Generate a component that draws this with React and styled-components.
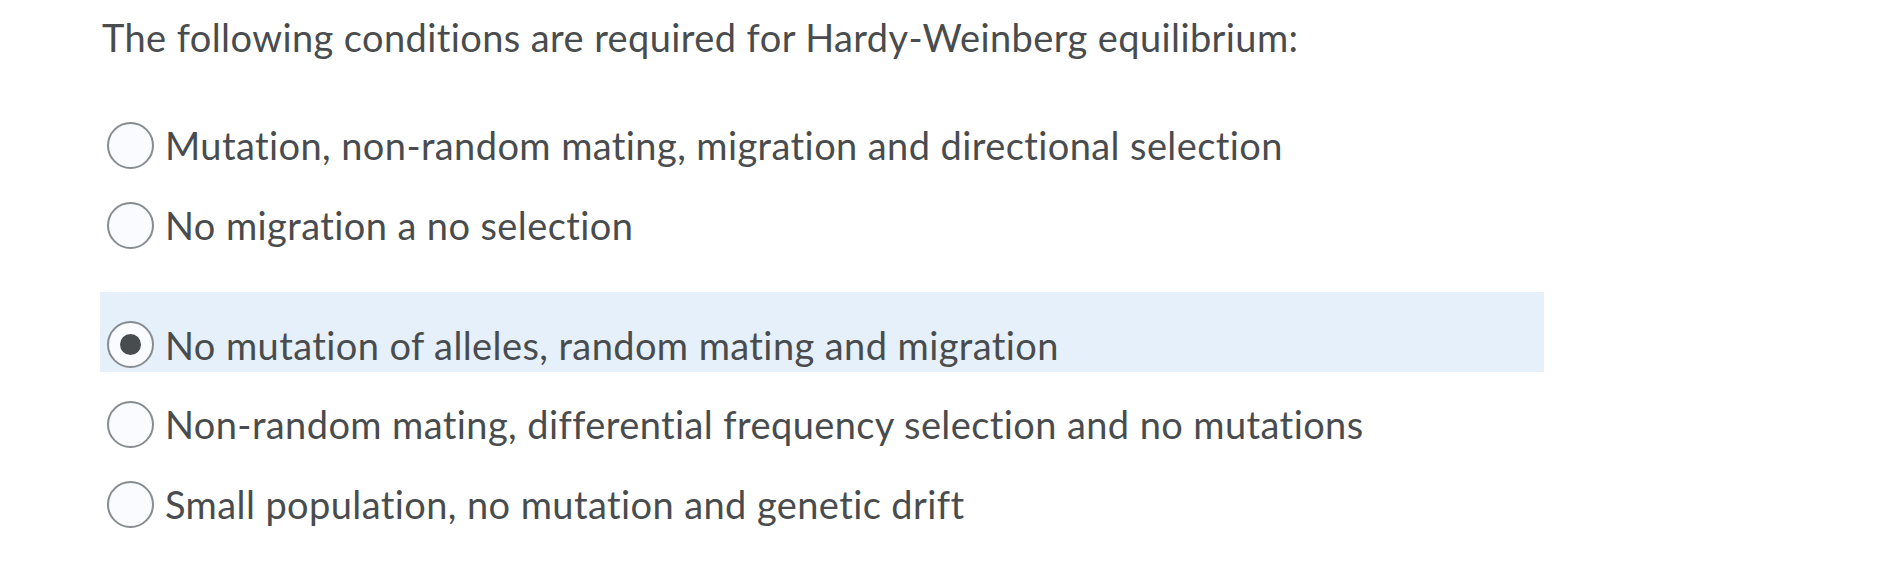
import React from 'react';
import styled, { createGlobalStyle } from 'styled-components';

const GlobalStyle = createGlobalStyle`
  body {
    margin: 0;
    background: #ffffff;
    font-family: Lato, "Noto Sans", sans-serif;
    color: #494c4e;
  }
`;

const Page = styled.div`
  padding: 0 0 0 100px;
  width: 1444px;
`;

const Question = styled.p`
  margin: 0;
  padding-top: 12px;
  padding-left: 2px;
  font-size: 38px;
  line-height: 50px;
  letter-spacing: 0.4px;
`;

const Options = styled.div`
  display: flex;
  flex-direction: column;
  margin-top: 43px;
`;

const Option = styled.label`
  display: flex;
  align-items: center;
  height: 80px;
  box-sizing: border-box;
  padding-left: 7px;
  padding-top: ${(p) => (p.$selected ? '25px' : '0')};
  margin-top: ${(p) => (p.$selected ? '27px' : '0')};
  margin-bottom: ${(p) => (p.$selected ? '12px' : '0')};
  background: ${(p) => (p.$selected ? '#e6f0fb' : 'transparent')};
  font-size: 38px;
  cursor: pointer;
`;

const Radio = styled.span`
  flex: none;
  width: 47px;
  height: 47px;
  box-sizing: border-box;
  border: 2px solid #878c90;
  border-radius: 50%;
  background: #f9fbff;
  display: flex;
  align-items: center;
  justify-content: center;

  &::after {
    content: '';
    display: ${(p) => (p.$checked ? 'block' : 'none')};
    width: 21px;
    height: 21px;
    border-radius: 50%;
    background: #494c4e;
  }
`;

const Label = styled.span`
  margin-left: 11px;
  letter-spacing: 0.4px;
`;

const options = [
  'Mutation, non-random mating, migration and directional selection',
  'No migration a no selection',
  'No mutation of alleles, random mating and migration',
  'Non-random mating, differential frequency selection and no mutations',
  'Small population, no mutation and genetic drift',
];

const App = () => {
  const selected = 2;
  return (
    <Page>
      <GlobalStyle />
      <Question>The following conditions are required for Hardy-Weinberg equilibrium:</Question>
      <Options>
        {options.map((text, i) => (
          <Option key={text} $selected={i === selected}>
            <Radio $checked={i === selected} />
            <Label>{text}</Label>
          </Option>
        ))}
      </Options>
    </Page>
  );
};

export default App;
